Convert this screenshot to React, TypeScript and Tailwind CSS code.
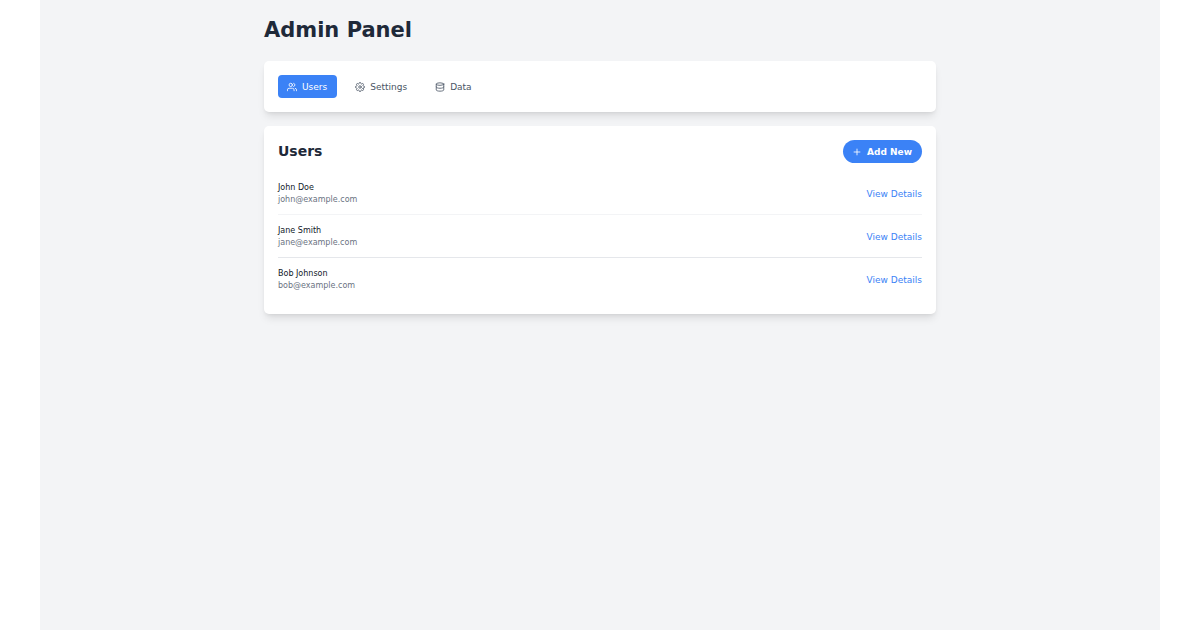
import { useState } from "react";
import { FiDatabase, FiPlus, FiSettings, FiUsers } from "react-icons/fi";

const tabs = [
  { name: "Users", Icon: FiUsers },
  { name: "Settings", Icon: FiSettings },
  { name: "Data", Icon: FiDatabase },
];

const users = [
  { name: "John Doe", email: "john@example.com" },
  { name: "Jane Smith", email: "jane@example.com" },
  { name: "Bob Johnson", email: "bob@example.com" },
];

const cardClass =
  "rounded-[5px] bg-white p-3.5 shadow-[0_6px_9px_-2px_rgb(0_0_0/0.1),0_2px_4px_-2px_rgb(0_0_0/0.1)]";

const buttonClass =
  "flex h-[23px] items-center gap-[5px] pr-[10px] pl-[9px] text-[9px] leading-[12px]";

export default function App() {
  const [active, setActive] = useState("Users");

  return (
    <div className="min-h-screen bg-white px-10 font-['DejaVu_Sans',sans-serif]">
      <div className="min-h-screen bg-gray-100 px-3.5 py-3.5">
        <main className="mx-auto max-w-[672px]">
          <h1 className="mb-3.5 text-[21px] leading-[33px] font-bold text-gray-800">Admin Panel</h1>

          <nav className={`mb-3.5 ${cardClass}`}>
            <div className="flex gap-[9px]">
              {tabs.map(({ name, Icon }) => (
                <button
                  key={name}
                  type="button"
                  onClick={() => setActive(name)}
                  className={`${buttonClass} rounded-[4px] ${
                    active === name ? "bg-[#3b82f6] text-white" : "text-gray-600"
                  }`}
                >
                  <Icon size={10} aria-hidden="true" />
                  {name}
                </button>
              ))}
            </div>
          </nav>

          <section className={cardClass}>
            <div className="mb-[9px] flex items-center justify-between">
              <h2 className="text-[14px] leading-[19px] font-bold text-gray-800">{active}</h2>
              <button
                type="button"
                className={`${buttonClass} rounded-full bg-[#3b82f6] font-bold text-white`}
              >
                <FiPlus size={10} aria-hidden="true" />
                Add New
              </button>
            </div>
            <ul>
              {users.map((user) => (
                <li
                  key={user.email}
                  className="flex items-center justify-between border-b border-gray-200 pt-[10px] pb-2 first:border-gray-100 last:border-b-0"
                >
                  <div className="text-[8px] leading-[12px]">
                    <p className="text-gray-900">{user.name}</p>
                    <p className="text-gray-500">{user.email}</p>
                  </div>
                  <button type="button" className="text-[9px] leading-[12px] text-[#3b82f6]">
                    View Details
                  </button>
                </li>
              ))}
            </ul>
          </section>
        </main>
      </div>
    </div>
  );
}
